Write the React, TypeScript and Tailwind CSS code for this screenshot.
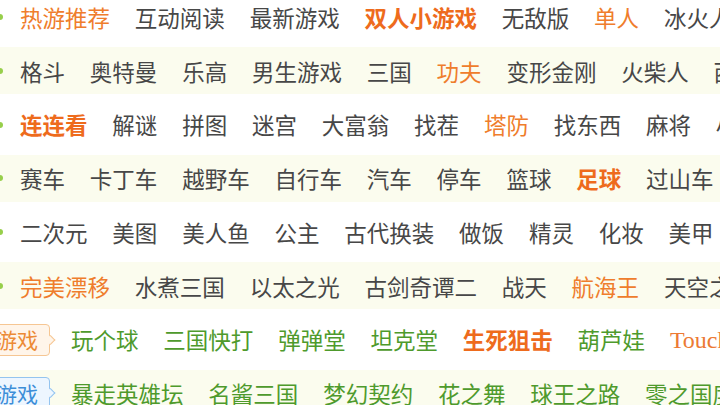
import React from 'react';

type Item = { t: string; c?: 'o' | 'ob' | 'g' | 'gb' | 'serif' };

const rows: { bg: boolean; tag?: 'orange' | 'blue'; items: Item[] }[] = [
  {
    bg: false,
    items: [
      { t: '热游推荐', c: 'o' },
      { t: '互动阅读' },
      { t: '最新游戏' },
      { t: '双人小游戏', c: 'ob' },
      { t: '无敌版' },
      { t: '单人', c: 'o' },
      { t: '冰火人' },
    ],
  },
  {
    bg: true,
    items: [
      { t: '格斗' },
      { t: '奥特曼' },
      { t: '乐高' },
      { t: '男生游戏' },
      { t: '三国' },
      { t: '功夫', c: 'o' },
      { t: '变形金刚' },
      { t: '火柴人' },
      { t: '西游' },
    ],
  },
  {
    bg: false,
    items: [
      { t: '连连看', c: 'ob' },
      { t: '解谜' },
      { t: '拼图' },
      { t: '迷宫' },
      { t: '大富翁' },
      { t: '找茬' },
      { t: '塔防', c: 'o' },
      { t: '找东西' },
      { t: '麻将' },
      { t: '小游戏' },
    ],
  },
  {
    bg: true,
    items: [
      { t: '赛车' },
      { t: '卡丁车' },
      { t: '越野车' },
      { t: '自行车' },
      { t: '汽车' },
      { t: '停车' },
      { t: '篮球' },
      { t: '足球', c: 'ob' },
      { t: '过山车' },
    ],
  },
  {
    bg: false,
    items: [
      { t: '二次元' },
      { t: '美图' },
      { t: '美人鱼' },
      { t: '公主' },
      { t: '古代换装' },
      { t: '做饭' },
      { t: '精灵' },
      { t: '化妆' },
      { t: '美甲' },
    ],
  },
  {
    bg: true,
    items: [
      { t: '完美漂移', c: 'o' },
      { t: '水煮三国' },
      { t: '以太之光' },
      { t: '古剑奇谭二' },
      { t: '战天' },
      { t: '航海王', c: 'o' },
      { t: '天空之城' },
    ],
  },
  {
    bg: false,
    tag: 'orange',
    items: [
      { t: '玩个球', c: 'g' },
      { t: '三国快打', c: 'g' },
      { t: '弹弹堂', c: 'g' },
      { t: '坦克堂', c: 'g' },
      { t: '生死狙击', c: 'ob' },
      { t: '葫芦娃', c: 'g' },
      { t: 'Touch', c: 'serif' },
    ],
  },
  {
    bg: true,
    tag: 'blue',
    items: [
      { t: '暴走英雄坛', c: 'g' },
      { t: '名酱三国', c: 'g' },
      { t: '梦幻契约', c: 'g' },
      { t: '花之舞', c: 'g' },
      { t: '球王之路', c: 'g' },
      { t: '零之国度', c: 'g' },
    ],
  },
];

function itemClass(c?: Item['c']) {
  switch (c) {
    case 'o':
      return 'text-[#ef7d2c]';
    case 'ob':
      return 'text-[#ee6b1c] font-bold';
    case 'g':
      return 'text-[#4e9a2c]';
    case 'serif':
      return "text-[#ec7a34] text-[24px] font-['Liberation_Serif',serif]";
    default:
      return 'text-[#474747]';
  }
}

function Tag({ kind }: { kind: 'orange' | 'blue' }) {
  const box =
    kind === 'orange'
      ? 'border-[#f6c693] bg-[#fff5ea] text-[#ec8a35]'
      : 'border-[#94c4ef] bg-[#edf6ff] text-[#3d8ed8]';
  const tip =
    kind === 'orange' ? 'border-[#f6c693] bg-[#fff5ea]' : 'border-[#94c4ef] bg-[#edf6ff]';
  return (
    <div
      className={`relative -ml-[16px] mr-[21px] flex h-[32px] items-center rounded-[4px] border-[1.5px] pl-[10px] pr-[11px] text-[21px] leading-none ${box}`}
    >
      网游戏
      <span
        className={`absolute -right-[4.5px] top-1/2 h-[7px] w-[7px] -translate-y-1/2 rotate-45 border-r-[1.5px] border-t-[1.5px] ${tip}`}
      />
    </div>
  );
}

export default function App() {
  return (
    <div className="h-[405px] w-[720px] overflow-hidden bg-white font-['Noto_Sans_CJK_SC','Noto_Sans',sans-serif]">
      <div className="-mt-[6.5px] flex flex-col gap-[6.75px]">
        {rows.map((row, i) => (
          <div
            key={i}
            className={`flex h-[47px] items-center overflow-hidden whitespace-nowrap ${
              row.bg ? 'bg-[#fbfcee]' : 'bg-white'
            }`}
          >
            {row.tag ? (
              <div className="-ml-[20px] flex items-center">
                <Tag kind={row.tag} />
              </div>
            ) : (
              <span className="-ml-[3px] mr-[17px] h-[6px] w-[6px] shrink-0 rounded-full bg-[#97cf4b]" />
            )}
            <div className="flex items-center gap-[24.8px] text-[22.5px] leading-none">
              {row.items.map((it, j) => (
                <span key={j} className={itemClass(it.c)}>
                  {it.t}
                </span>
              ))}
            </div>
          </div>
        ))}
      </div>
    </div>
  );
}
